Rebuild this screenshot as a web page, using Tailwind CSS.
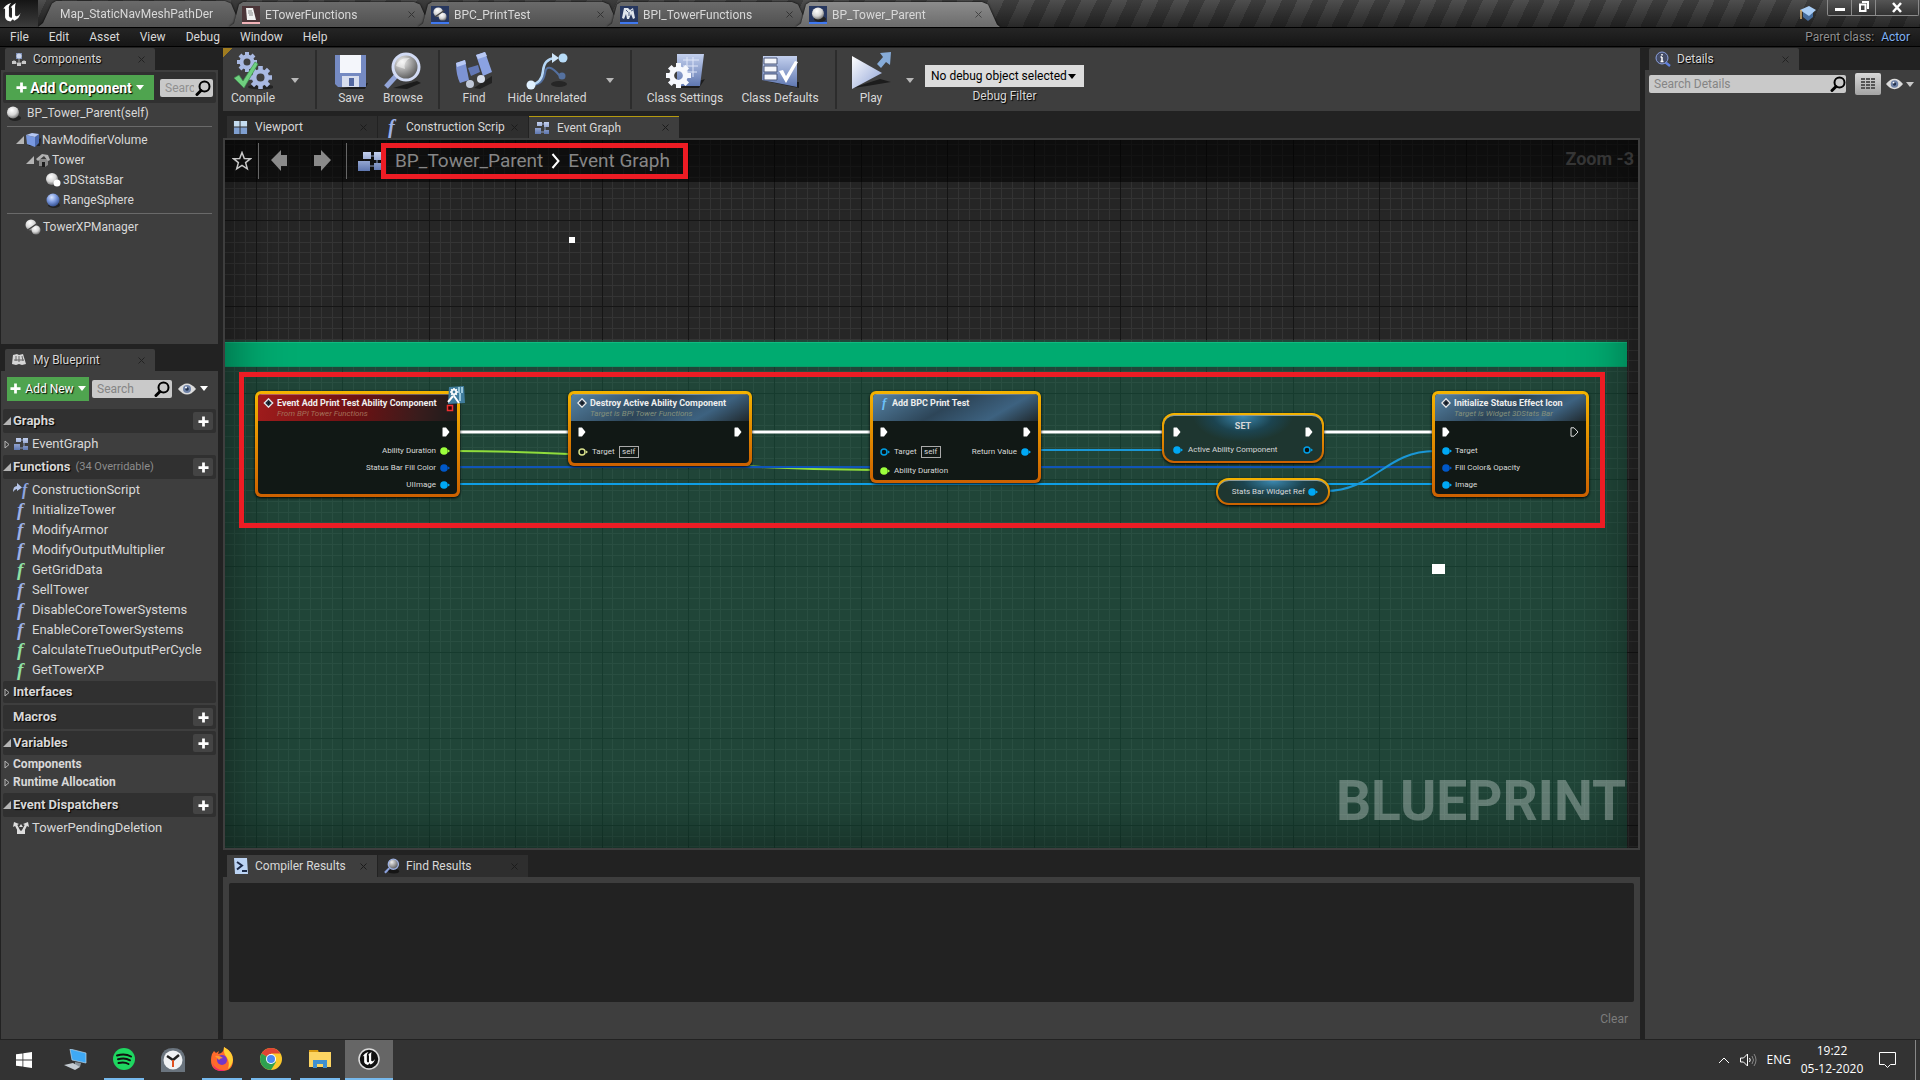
<!DOCTYPE html>
<html lang="en">
<head>
  <meta charset="UTF-8">
  <title>BP_Tower_Parent</title>
  <script src="https://cdn.jsdelivr.net/npm/@tailwindcss/browser@4"></script>
</head>
<body class="h-screen min-h-[900px] flex flex-col overflow-hidden bg-[#222222] font-['Roboto',sans-serif] text-[12px] leading-[16px] text-[#d8d8d8]">

  <!-- shared icons -->
  <svg class="absolute w-0 h-0">
    <defs>
      <linearGradient id="steel" x1="0" y1="0" x2="0" y2="1"><stop offset="0" stop-color="#c3d0ee"/><stop offset="1" stop-color="#5f77b0"/></linearGradient>
      <linearGradient id="pale" x1="0" y1="0" x2="1" y2="1"><stop offset="0" stop-color="#ffffff"/><stop offset="1" stop-color="#8ea2d6"/></linearGradient>
      <radialGradient id="ball" cx=".4" cy=".3" r=".7"><stop offset="0" stop-color="#ffffff"/><stop offset=".6" stop-color="#d6d6d6"/><stop offset="1" stop-color="#777777"/></radialGradient>
      <radialGradient id="blueball" cx=".4" cy=".3" r=".7"><stop offset="0" stop-color="#d8e4ff"/><stop offset=".5" stop-color="#7d9be0"/><stop offset="1" stop-color="#35508f"/></radialGradient>
      <radialGradient id="lens" cx=".35" cy=".3" r=".8"><stop offset="0" stop-color="#eeeeee"/><stop offset=".5" stop-color="#999999"/><stop offset="1" stop-color="#444444"/></radialGradient>
    </defs>
    <symbol id="caret" viewBox="0 0 10 6"><path d="M0 0h10L5 6z" fill="currentColor"/></symbol>
    <symbol id="open" viewBox="0 0 8 8"><path d="M8 0v8H0z" fill="#b4b4b4"/></symbol>
    <symbol id="closed" viewBox="0 0 6 9"><path d="M1 1l4 3.500-4 3.500z" fill="none" stroke="#b4b4b4"/></symbol>
    <symbol id="plus" viewBox="0 0 12 12"><path d="M4.500 0.500h3v4h4v3h-4v4h-3v-4h-4v-3h4z" fill="#fff"/></symbol>
    <symbol id="x" viewBox="0 0 7 7"><path d="M.5.5l6 6M6.500.5l-6 6" stroke="currentColor" fill="none"/></symbol>
    <symbol id="mag" viewBox="0 0 16 16"><circle cx="9.500" cy="6.500" r="5" fill="none" stroke="#000" stroke-width="2"/><path d="M6 10.500L2 14.500" stroke="#000" stroke-width="3" stroke-linecap="round"/></symbol>
    <symbol id="eye" viewBox="0 0 18 12"><path d="M0 6q9-11 18 0-9 11-18 0z" fill="#dcdcdc"/><circle cx="9" cy="6" r="4" fill="#6f83a8"/><circle cx="9" cy="6" r="1.800" fill="#24324e"/><circle cx="8" cy="4.500" r="1" fill="#fff"/></symbol>
    <symbol id="graph" viewBox="0 0 16 14"><path d="M7 3h3M11 6v3M7 11h4" stroke="#8b9cc4"/><path d="M3 1h5v4H3zM10 1h5v5h-5zM1 7h6v6H1zM10 9h5v4h-5z" fill="url(#steel)"/></symbol>
    <symbol id="sphere" viewBox="0 0 16 16"><ellipse cx="9" cy="13" rx="6" ry="3" fill="#222"/><circle cx="7" cy="7.500" r="6" fill="url(#ball)"/></symbol>
    <symbol id="comp" viewBox="0 0 16 16"><circle cx="6" cy="6" r="5.500" fill="url(#ball)"/><circle cx="11" cy="11" r="4.500" fill="url(#ball)"/><path d="M2 11.500L13 4" stroke="#444" stroke-width="1.500"/></symbol>
    <symbol id="iface" viewBox="0 0 16 16"><path d="M3 2h4l2 2 3-2 2 10-2 1-2-5-2 5H6L5 8l-2 5-2-1z" fill="#dfe4ec"/><path d="M5 4l2 2M10 5l2-1M8 6v4" stroke="#4c5c80"/></symbol>
    <symbol id="find" viewBox="0 0 18 18"><path d="M1 16.500l5-5" stroke="#8aa0dc" stroke-width="2.500"/><ellipse cx="11" cy="15" rx="6" ry="2.500" fill="#151515"/><circle cx="10.500" cy="7" r="5.700" fill="url(#lens)" stroke="#9db0e0" stroke-width="1.500"/></symbol>
    <symbol id="exec" viewBox="0 0 8 10"><path d="M1 .5h3L7.500 5 4 9.500H1q-.5 0-.5-.5V1q0-.5.5-.5z" fill="#fff"/></symbol>
    <symbol id="pin" viewBox="0 0 10 8"><circle cx="4" cy="4" r="3.800" fill="currentColor"/><path d="M8 2.500L10 4 8 5.500z" fill="currentColor"/></symbol>
    <symbol id="ring" viewBox="0 0 10 8"><circle cx="4" cy="4" r="3" fill="#0c1210" stroke="currentColor" stroke-width="1.500"/><path d="M8 2.500L10 4 8 5.500z" fill="currentColor"/></symbol>
    <symbol id="diamond" viewBox="0 0 10 10"><path d="M5 .8L9.200 5 5 9.200.8 5z" fill="#253040" stroke="#e8e8e8" stroke-width="1.300"/><path d="M4.500 3.500v3L6.500 5z" fill="#111"/></symbol>
    <symbol id="gear" viewBox="-10 -10 20 20"><circle r="5.500" fill="none" stroke="currentColor" stroke-width="4"/><path d="M0-10v4M0 10V6M-10 0h4M10 0H6M-7-7l3 3M7 7L4 4M-7 7l3-3M7-7L4-4" stroke="currentColor" stroke-width="4"/></symbol>
    <symbol id="ulogo" viewBox="0 0 24 26"><path d="M0 9Q3 2 11 0 7 4 8 7v10q1 3 4 2V7q-1-2-2-1 3-4 7-6-1 2-1 5v11q1 2 3 1 3-1 4-4-1 7-8 10l-2-2-3 3Q5 24 3 19V8Q2 6 0 9z" fill="currentColor"/></symbol>
  </svg>

  <!-- title bar with asset tabs -->
  <header class="h-[27px] shrink-0 flex bg-[repeating-linear-gradient(115deg,#00000000_0_14px,#00000038_14px_28px),linear-gradient(#4e4e4e,#282828)] [text-shadow:1px_1px_1px_#000]">
    <div class="w-[38px] bg-[linear-gradient(#151515,#3c3c3c)] text-white shrink-0"><svg class="w-[24px] h-[20px] mt-[3px]"><use href="#ulogo"/></svg></div>
    <nav class="flex grow">
      <div class="drop-shadow-[0_0_1px_#000] h-full"><button class="w-[205px] h-[26px] mt-[1px] pl-[22px] flex items-center bg-linear-to-b from-[#6a6a6a] to-[#525252] [clip-path:polygon(5px_85%,14px_10%,18px_0,calc(100%-18px)_0,calc(100%-12px)_10%,calc(100%-3px)_90%,100%_100%,0_100%)]">Map_StaticNavMeshPathDer</button></div>
      <div class="drop-shadow-[0_0_1px_#000] h-full -ml-[14px]"><button class="w-[203px] h-[25px] mt-[2px] pl-[13px] pr-[17px] flex items-center gap-[5px] bg-linear-to-b from-[#6a6a6a] to-[#505050] [clip-path:polygon(5px_85%,10px_10%,14px_0,calc(100%-18px)_0,calc(100%-12px)_10%,calc(100%-3px)_90%,100%_100%,0_100%)]">
        <svg class="w-[18px] h-[18px]" viewBox="0 0 18 18"><path fill="#4b3538" d="M0 0h18v18H0z"/><path d="M4 2h7l3 12H5z" fill="#f2f2f2"/><path d="M6 5h4M6 7h5M7 9h4" stroke="#888"/><path d="M0 16h18v2H0z" fill="#f1b3b8"/></svg>
        ETowerFunctions<svg class="w-[7px] h-[7px] ml-auto text-[#333]"><use href="#x"/></svg></button></div>
      <div class="drop-shadow-[0_0_1px_#000] h-full -ml-[14px]"><button class="w-[203px] h-[25px] mt-[2px] pl-[13px] pr-[17px] flex items-center gap-[5px] bg-linear-to-b from-[#6a6a6a] to-[#505050] [clip-path:polygon(5px_85%,10px_10%,14px_0,calc(100%-18px)_0,calc(100%-12px)_10%,calc(100%-3px)_90%,100%_100%,0_100%)]">
        <svg class="w-[18px] h-[18px]" viewBox="0 0 18 18"><path fill="#27375f" d="M0 0h18v18H0z"/><use href="#comp" x="2" y="0" width="14" height="16"/><path d="M0 16h18v2H0z" fill="#3f78f0"/></svg>
        BPC_PrintTest<svg class="w-[7px] h-[7px] ml-auto text-[#333]"><use href="#x"/></svg></button></div>
      <div class="drop-shadow-[0_0_1px_#000] h-full -ml-[14px]"><button class="w-[203px] h-[25px] mt-[2px] pl-[13px] pr-[17px] flex items-center gap-[5px] bg-linear-to-b from-[#6a6a6a] to-[#505050] [clip-path:polygon(5px_85%,10px_10%,14px_0,calc(100%-18px)_0,calc(100%-12px)_10%,calc(100%-3px)_90%,100%_100%,0_100%)]">
        <svg class="w-[18px] h-[18px]" viewBox="0 0 18 18"><path fill="#27375f" d="M0 0h18v18H0z"/><use href="#iface" x="1" y="0" width="16" height="16"/><path d="M0 16h18v2H0z" fill="#3f78f0"/></svg>
        BPI_TowerFunctions<svg class="w-[7px] h-[7px] ml-auto text-[#333]"><use href="#x"/></svg></button></div>
      <div class="drop-shadow-[0_0_1px_#000] h-full -ml-[14px]"><button class="w-[204px] h-[25px] mt-[2px] pl-[13px] pr-[18px] flex items-center gap-[5px] bg-linear-to-b from-[#8c8c8c] to-[#6c6c6c] [clip-path:polygon(5px_85%,10px_10%,14px_0,calc(100%-18px)_0,calc(100%-12px)_10%,calc(100%-3px)_90%,100%_100%,0_100%)]">
        <svg class="w-[18px] h-[18px]" viewBox="0 0 18 18"><path fill="#27375f" d="M0 0h18v18H0z"/><use href="#sphere" x="2" y="0" width="16" height="16"/><path d="M0 16h18v2H0z" fill="#3f78f0"/></svg>
        BP_Tower_Parent<svg class="w-[7px] h-[7px] ml-auto text-[#444]"><use href="#x"/></svg></button></div>
    </nav>
    <svg class="w-[18px] h-[16px] mt-[5px] mr-[10px]" viewBox="0 0 18 16"><path d="M4 7v5l5 4 5-4V7z" fill="#456c9c"/><path d="M1 5l9-4 7 4-7 6z" fill="#a9cdf5"/><path d="M2 5v9" stroke="#d8b070" stroke-width="1.500"/></svg>
    <div class="flex h-[16px] mr-[1px] border border-t-0 border-[#8a8a8a] divide-x divide-[#8a8a8a] bg-linear-to-b from-[#555] to-[#333] rounded-b-[2px]">
      <button aria-label="Minimize" class="w-[24px] flex justify-center"><svg class="w-[10px] h-[12px]"><path d="M0 8h10v3H0z" fill="#fff"/></svg></button>
      <button aria-label="Restore" class="w-[24px] flex justify-center"><svg class="w-[11px] h-[13px]"><path d="M4 2h6v7M2 4.500h5.500v6.500H2z" fill="none" stroke="#fff" stroke-width="2"/></svg></button>
      <button aria-label="Close" class="w-[42px] flex justify-center"><svg class="w-[10px] h-[13px]"><path d="M1 3l8 9M9 3l-8 9" stroke="#fff" stroke-width="2.500"/></svg></button>
    </div>
  </header>

  <!-- menu -->
  <nav class="h-[20px] shrink-0 flex items-center px-[10px] gap-[20px] border-y border-black bg-linear-to-b from-[#252525] to-[#161616] mb-[1px] [text-shadow:1px_1px_1px_#000]">
    <button>File</button><button>Edit</button><button>Asset</button><button>View</button><button>Debug</button><button>Window</button><button>Help</button>
    <span class="ml-auto text-[#8f8f8f]">Parent class: <a href="#" class="ml-[4px] text-[#7fb2f5]">Actor</a></span>
  </nav>

  <div class="grow flex min-h-0 pl-[1px] gap-[5px]">

    <!-- left column -->
    <aside class="w-[217px] shrink-0 flex flex-col">
      <div class="ml-[4px] w-[150px] h-[22px] shrink-0 flex items-center pl-[6px] pr-[10px] gap-[6px] bg-[#3e3e3e] rounded-t-[2px] [text-shadow:1px_1px_1px_#000]">
        <svg class="w-[16px] h-[16px]" viewBox="0 0 16 16"><path d="M5 2h6v6H5z" fill="#7c8fb8"/><path d="M8 8v6M3 9v3h10V9" stroke="#aaa" fill="none"/><circle cx="8" cy="5" r="2.500" fill="#cdd6ea"/><path d="M1 10h4v3H1zM11 10h4v3h-4zM6 12h4v3H6z" fill="#c8c8c8"/></svg>
        Components<svg class="w-[7px] h-[7px] ml-auto text-[#222]"><use href="#x"/></svg>
      </div>
      <section class="h-[274px] shrink-0 bg-[#3e3e3e] pt-[2px] px-[2px]">
        <div class="h-[31px] flex items-center gap-[6px] pl-[3px] pr-[3px] bg-[#303030] rounded-[2px]">
          <button class="w-[148px] h-[25px] flex items-center justify-center gap-[3px] bg-[#4fa44f] text-white font-bold text-[14px] [text-shadow:1px_1px_1px_#000]"><svg class="w-[11px] h-[11px]" viewBox="0 0 12 12"><use href="#plus"/></svg>Add Component<svg class="w-[8px] h-[5px] ml-[1px]"><use href="#caret"/></svg></button>
          <label class="w-[53px] h-[18px] flex items-center bg-[#c9c9c9] rounded-[2px]"><input aria-label="Search components" placeholder="Search" class="w-[34px] pl-[5px] outline-none placeholder:text-[#909090]"><svg class="w-[16px] h-[16px] ml-[1px]"><use href="#mag"/></svg></label>
        </div>
        <div class="h-[20px] flex items-center pl-[3px] gap-[5px]"><svg class="w-[16px] h-[16px]"><use href="#sphere"/></svg>BP_Tower_Parent(self)</div>
        <hr class="mx-[4px] mt-[3px] mb-[3px] border-[#6a6a6a]">
        <div class="h-[20px] flex items-center pl-[13px] gap-[1px]"><svg class="w-[8px] h-[8px]"><use href="#open"/></svg><svg class="w-[16px] h-[16px]" viewBox="0 0 16 16"><path d="M3 14h12l1-8z" fill="#222"/><path d="M1 3l9 2v10l-8-3z" fill="#7898e0"/><path d="M10 5l4-3v9l-4 4z" fill="#4a68ad"/><path d="M1 3l6-2 7 1-4 3z" fill="#b5c8f5"/></svg>NavModifierVolume</div>
        <div class="h-[20px] flex items-center pl-[23px] gap-[1px]"><svg class="w-[8px] h-[8px]"><use href="#open"/></svg><svg class="w-[16px] h-[16px]" viewBox="0 0 16 16"><path d="M4 7v7h3v-4h3v5l3-2V7z" fill="#888"/><path d="M1 7l6-5 6 1 2 5-2 1-4-5-6 5z" fill="#b2b2b2"/><path d="M7 10h3v5H7z" fill="#1c1c1c"/></svg>Tower</div>
        <div class="h-[20px] flex items-center pl-[42px] gap-[2px]"><svg class="w-[16px] h-[16px]" viewBox="0 0 16 16"><circle cx="7" cy="7" r="6" fill="url(#ball)"/><circle cx="12" cy="11" r="3.500" fill="#fff"/></svg>3DStatsBar</div>
        <div class="h-[20px] flex items-center pl-[42px] gap-[2px]"><svg class="w-[16px] h-[16px]" viewBox="0 0 16 16"><ellipse cx="9" cy="13" rx="6" ry="3" fill="#222"/><circle cx="8" cy="8" r="6.500" fill="url(#blueball)"/></svg>RangeSphere</div>
        <hr class="mx-[4px] mt-[3px] mb-[3px] border-[#6a6a6a]">
        <div class="h-[20px] flex items-center pl-[22px] gap-[2px]"><svg class="w-[16px] h-[16px]"><use href="#comp"/></svg>TowerXPManager</div>
      </section>

      <div class="ml-[4px] mt-[5px] w-[150px] h-[22px] shrink-0 flex items-center pl-[6px] pr-[10px] gap-[6px] bg-[#3e3e3e] rounded-t-[2px] [text-shadow:1px_1px_1px_#000]">
        <svg class="w-[16px] h-[16px]" viewBox="0 0 16 16"><path d="M2 3l4-1 2 1 4-1 3 10-4 1-3-1-3 1-4-1z" fill="#d6d6d6"/><path d="M5 4v5M8 4v6M11 4l1 5M3 8h10" stroke="#666"/></svg>
        My Blueprint<svg class="w-[7px] h-[7px] ml-auto text-[#222]"><use href="#x"/></svg>
      </div>
      <section class="grow bg-[#3e3e3e] px-[2px] pt-[5px] text-[13px]">
        <div class="h-[25px] flex items-center pl-[4px] text-[12px]">
          <button class="w-[82px] h-[24px] flex items-center justify-center gap-[4px] bg-[#4fa44f] text-white [text-shadow:1px_1px_1px_#000]"><svg class="w-[11px] h-[11px]" viewBox="0 0 12 12"><use href="#plus"/></svg>Add New<svg class="w-[8px] h-[5px]"><use href="#caret"/></svg></button>
          <label class="ml-[3px] w-[80px] h-[18px] flex items-center bg-[#c9c9c9] rounded-[2px]"><input aria-label="Search blueprint" placeholder="Search" class="w-[62px] pl-[5px] outline-none placeholder:text-[#858585]"><svg class="w-[16px] h-[16px]"><use href="#mag"/></svg></label>
          <button aria-label="View options" class="ml-[6px] flex items-center gap-[4px] text-white"><svg class="w-[18px] h-[12px]"><use href="#eye"/></svg><svg class="w-[8px] h-[5px]"><use href="#caret"/></svg></button>
        </div>

        <div class="mt-[8px] h-[24px] flex items-center gap-[2px] pr-[3px] bg-[#303030] rounded-[2px]"><svg class="w-[8px] h-[8px]"><use href="#open"/></svg><b class="[text-shadow:1px_1px_1px_#000]">Graphs</b><button aria-label="Add graph" class="ml-auto w-[20px] h-[18px] bg-[#444] rounded-[2px] flex items-center justify-center"><svg class="w-[11px] h-[11px]" viewBox="0 0 12 12"><use href="#plus"/></svg></button></div>
        <div class="h-[22px] flex items-center pl-[1px] gap-[3px]"><svg class="w-[6px] h-[9px]"><use href="#closed"/></svg><svg class="w-[16px] h-[14px]"><use href="#graph"/></svg>EventGraph</div>
        <div class="h-[24px] flex items-center gap-[2px] pr-[3px] bg-[#303030] rounded-[2px]"><svg class="w-[8px] h-[8px]"><use href="#open"/></svg><b class="[text-shadow:1px_1px_1px_#000]">Functions</b><span class="ml-[3px] text-[11px] text-[#8c8c8c]">(34 Overridable)</span><button aria-label="Add function" class="ml-auto w-[20px] h-[18px] bg-[#444] rounded-[2px] flex items-center justify-center"><svg class="w-[11px] h-[11px]" viewBox="0 0 12 12"><use href="#plus"/></svg></button></div>
        <ul class="pt-[1px]">
          <li class="h-[20px] flex items-center pl-[10px]"><svg class="w-[9px] h-[14px]" viewBox="0 0 9 14"><path d="M0 9q0-6 4-6V0l5 4.500L4 8V6Q2 6 0 9z" fill="#b7c6ea"/></svg><i aria-hidden="true" class="w-[10px] font-['Liberation_Serif',serif] font-bold text-[16px] text-[#8fa6e0]">f</i>ConstructionScript</li>
          <li class="h-[20px] flex items-center pl-[14px]"><i aria-hidden="true" class="w-[15px] font-['Liberation_Serif',serif] font-bold text-[19px] text-[#9cb0e6]">f</i>InitializeTower</li>
          <li class="h-[20px] flex items-center pl-[14px]"><i aria-hidden="true" class="w-[15px] font-['Liberation_Serif',serif] font-bold text-[19px] text-[#9cb0e6]">f</i>ModifyArmor</li>
          <li class="h-[20px] flex items-center pl-[14px]"><i aria-hidden="true" class="w-[15px] font-['Liberation_Serif',serif] font-bold text-[19px] text-[#9cb0e6]">f</i>ModifyOutputMultiplier</li>
          <li class="h-[20px] flex items-center pl-[14px]"><i aria-hidden="true" class="w-[15px] font-['Liberation_Serif',serif] font-bold text-[19px] text-[#8fe0a4]">f</i>GetGridData</li>
          <li class="h-[20px] flex items-center pl-[14px]"><i aria-hidden="true" class="w-[15px] font-['Liberation_Serif',serif] font-bold text-[19px] text-[#9cb0e6]">f</i>SellTower</li>
          <li class="h-[20px] flex items-center pl-[14px]"><i aria-hidden="true" class="w-[15px] font-['Liberation_Serif',serif] font-bold text-[19px] text-[#9cb0e6]">f</i>DisableCoreTowerSystems</li>
          <li class="h-[20px] flex items-center pl-[14px]"><i aria-hidden="true" class="w-[15px] font-['Liberation_Serif',serif] font-bold text-[19px] text-[#9cb0e6]">f</i>EnableCoreTowerSystems</li>
          <li class="h-[20px] flex items-center pl-[14px]"><i aria-hidden="true" class="w-[15px] font-['Liberation_Serif',serif] font-bold text-[19px] text-[#8fe0a4]">f</i>CalculateTrueOutputPerCycle</li>
          <li class="h-[20px] flex items-center pl-[14px]"><i aria-hidden="true" class="w-[15px] font-['Liberation_Serif',serif] font-bold text-[19px] text-[#8fe0a4]">f</i>GetTowerXP</li>
        </ul>
        <div class="mt-[1px] h-[22px] flex items-center gap-[3px] pl-[1px] bg-[#303030] rounded-[2px]"><svg class="w-[6px] h-[9px]"><use href="#closed"/></svg><b class="[text-shadow:1px_1px_1px_#000]">Interfaces</b></div>
        <div class="mt-[2px] h-[24px] flex items-center pl-[10px] pr-[3px] bg-[#303030] rounded-[2px]"><b class="[text-shadow:1px_1px_1px_#000]">Macros</b><button aria-label="Add macro" class="ml-auto w-[20px] h-[18px] bg-[#444] rounded-[2px] flex items-center justify-center"><svg class="w-[11px] h-[11px]" viewBox="0 0 12 12"><use href="#plus"/></svg></button></div>
        <div class="mt-[2px] h-[24px] flex items-center gap-[2px] pr-[3px] bg-[#303030] rounded-[2px]"><svg class="w-[8px] h-[8px]"><use href="#open"/></svg><b class="[text-shadow:1px_1px_1px_#000]">Variables</b><button aria-label="Add variable" class="ml-auto w-[20px] h-[18px] bg-[#444] rounded-[2px] flex items-center justify-center"><svg class="w-[11px] h-[11px]" viewBox="0 0 12 12"><use href="#plus"/></svg></button></div>
        <div class="h-[18px] flex items-center gap-[3px] pl-[1px]"><svg class="w-[6px] h-[9px]"><use href="#closed"/></svg><b class="text-[12px]">Components</b></div>
        <div class="h-[18px] flex items-center gap-[3px] pl-[1px]"><svg class="w-[6px] h-[9px]"><use href="#closed"/></svg><b class="text-[12px]">Runtime Allocation</b></div>
        <div class="mt-[2px] h-[24px] flex items-center gap-[2px] pr-[3px] bg-[#303030] rounded-[2px]"><svg class="w-[8px] h-[8px]"><use href="#open"/></svg><b class="[text-shadow:1px_1px_1px_#000]">Event Dispatchers</b><button aria-label="Add dispatcher" class="ml-auto w-[20px] h-[18px] bg-[#444] rounded-[2px] flex items-center justify-center"><svg class="w-[11px] h-[11px]" viewBox="0 0 12 12"><use href="#plus"/></svg></button></div>
        <div class="h-[22px] flex items-center pl-[10px] gap-[3px]"><svg class="w-[16px] h-[14px]" viewBox="0 0 16 14"><path d="M4 7l4 3 4-3v6H4z" fill="#ddd"/><path d="M7 12L3 4M9 12l4-8" stroke="#ddd" stroke-width="2.500"/><path d="M0 6l1-5 5 2zM16 6l-1-5-5 2zM6 6l2-3 2 3z" fill="#ddd"/></svg>TowerPendingDeletion</div>
      </section>
    </aside>

    <!-- centre column -->
    <main class="grow min-w-0 flex flex-col">
      <div class="h-[63px] shrink-0 flex items-stretch bg-[#3e3e3e] bg-[linear-gradient(135deg,#a07c20_7px,#00000000_7px)] [text-shadow:1px_1px_1px_#000]">
        <button class="w-[60px] flex flex-col items-center pt-[3px]"><svg class="w-[40px] h-[39px]" viewBox="0 0 40 39"><ellipse cx="28" cy="36" rx="13" ry="2.500" fill="#222"/><g color="#a9b9e2"><use href="#gear" x="4" y="1" width="20" height="20"/><use href="#gear" x="16" y="15" width="23" height="23"/></g><path d="M1 27l5-3 4 6L22 11l3 2-14 24z" fill="#6fd07f" stroke="#3f8f50" stroke-width=".7"/></svg>Compile</button>
        <button aria-label="Compile options" class="w-[24px] pt-[2px] flex items-center justify-center text-[#b8b8b8]"><svg class="w-[8px] h-[5px]"><use href="#caret"/></svg></button>
        <div class="w-[2px] my-[2px] mx-[8px] bg-[#2c2c2c]"></div>
        <button class="w-[52px] flex flex-col items-center pt-[3px]"><svg class="w-[36px] h-[39px]" viewBox="0 0 36 39"><path d="M6 38h26l3-6z" fill="#1c1c1c"/><path d="M2 4h31v32H5l-3-3z" fill="#758ac2"/><path d="M7 4h21v18H7z" fill="#f4f6fb"/><path d="M9 25h17v11H9z" fill="#d8deee"/><path d="M16 27h5v8h-5z" fill="#5468a0"/></svg>Save</button>
        <button class="w-[52px] flex flex-col items-center pt-[3px]"><svg class="w-[40px] h-[39px]" viewBox="0 0 40 39"><path d="M10 37l24-7 4 2-14 6z" fill="#1c1c1c"/><path d="M3 36l10-11" stroke="#93a5d8" stroke-width="5"/><circle cx="23" cy="16" r="13" fill="url(#lens)" stroke="#d2dbf4" stroke-width="3"/><path d="M13 15q3-9 14-8-7 4-5 11z" fill="#fff" opacity=".5"/></svg>Browse</button>
        <div class="w-[2px] my-[2px] ml-[9px] mr-[8px] bg-[#2c2c2c]"></div>
        <button class="w-[52px] flex flex-col items-center pt-[3px]"><svg class="w-[40px] h-[39px]" viewBox="0 0 40 39"><path d="M20 37l18-12v7l-12 6z" fill="#222"/><path d="M2 12l9-3 4 20-9 3q-4-8-4-20z" fill="#7d93d4"/><path d="M22 4l9-3 7 20-9 4z" fill="#8ba2e2"/><path d="M14 17l10-3 2 7-9 4z" fill="#6277b5"/><path d="M2 12l9-3 1 4-9 3zM22 4l9-3 2 4-9 3z" fill="#b8c8f4"/><circle cx="16" cy="33" r="4" fill="#c0c8d8"/><circle cx="27" cy="28" r="4" fill="#d8deea"/></svg>Find</button>
        <button class="w-[94px] flex flex-col items-center pt-[3px]"><svg class="w-[44px] h-[39px]" viewBox="0 0 44 39"><ellipse cx="34" cy="33" rx="8" ry="3" fill="#262626"/><path d="M6 34Q18 34 20 22T35 25" fill="none" stroke="#54709f" stroke-width="2"/><path d="M6 34Q17 32 18 20T30 7" fill="none" stroke="#b6d7f6" stroke-width="2.500"/><path d="M27 2l7 5-7 5z" fill="#cfe6fa"/><circle cx="6" cy="34" r="4.500" fill="#dff0ff"/><circle cx="38" cy="7" r="4.500" fill="#b8dcf8"/><circle cx="37" cy="25" r="3.500" fill="#55719f"/></svg>Hide Unrelated</button>
        <button aria-label="Hide options" class="w-[31px] pt-[2px] flex items-center justify-center text-[#b8b8b8]"><svg class="w-[8px] h-[5px]"><use href="#caret"/></svg></button>
        <div class="w-[2px] my-[2px] mx-[5px] bg-[#2c2c2c]"></div>
        <button class="w-[96px] flex flex-col items-center pt-[3px]"><svg class="w-[40px] h-[39px]" viewBox="0 0 40 39"><path d="M12 37h22l6-9z" fill="#1c1c1c"/><path d="M12 3h27l-4 32H12z" fill="url(#steel)"/><path d="M18 9h16M18 15h15M18 21h14M22 6v20M28 6v20" stroke="#dfe6f8"/><g color="#f6f8fd"><use href="#gear" x="1" y="12" width="25" height="25"/></g></svg>Class Settings</button>
        <button class="w-[94px] flex flex-col items-center pt-[3px]"><svg class="w-[40px] h-[39px]" viewBox="0 0 40 39"><path d="M10 31h29v6z" fill="#1c1c1c"/><path d="M3 5h34v31L2 29z" fill="url(#steel)"/><path d="M4 7h13v6H4zM4 15h13v6H4zM4 23h13v6H4z" fill="#f5f7fc" stroke="#4a5678"/><path d="M19 20l4-1 3 6 9-15 3 1-12 21z" fill="#fff"/></svg>Class Defaults</button>
        <div class="w-[2px] my-[2px] mx-[8px] bg-[#2c2c2c]"></div>
        <button class="w-[52px] flex flex-col items-center pt-[3px]"><svg class="w-[42px] h-[39px]" viewBox="0 0 42 39"><path d="M2 37l28-9 11 3-24 4z" fill="#1c1c1c"/><path d="M2 5l30 17L2 38z" fill="url(#pale)"/><path d="M27 13l6-7-3-4 11-1-1 13-4-3-5 6z" fill="#86abd8"/></svg>Play</button>
        <button aria-label="Play options" class="w-[26px] pt-[2px] flex items-center justify-center text-[#b8b8b8]"><svg class="w-[8px] h-[5px]"><use href="#caret"/></svg></button>
        <div class="ml-[2px] pt-[17px] flex flex-col items-center gap-[1px]">
          <div class="relative">
            <select id="debug" class="block appearance-none w-[159px] h-[22px] pl-[6px] bg-[#dcdcdc] text-black [text-shadow:none]"><option>No debug object selected</option></select>
            <svg class="absolute right-[8px] top-[9px] w-[8px] h-[5px] text-black"><use href="#caret"/></svg>
          </div>
          <label for="debug">Debug Filter</label>
        </div>
      </div>

      <div class="h-[22px] shrink-0 mt-[5px] pl-[4px] flex gap-[1px] [text-shadow:1px_1px_1px_#000]">
        <button class="w-[150px] flex items-center pl-[6px] pr-[10px] gap-[7px] bg-[#2e2e2e]"><svg class="w-[15px] h-[15px]" viewBox="0 0 16 16"><path d="M1 1h6v6H1zM8 1h7v6H8z" fill="#c4dcf0"/><path d="M1 8h6v7H1zM8 8h7v7H8z" fill="#7f9fd0"/></svg>Viewport<svg class="w-[7px] h-[7px] ml-auto text-[#1b1b1b]"><use href="#x"/></svg></button>
        <button class="w-[150px] flex items-center pl-[10px] pr-[10px] bg-[#2e2e2e]"><i aria-hidden="true" class="w-[18px] text-left font-['Liberation_Serif',serif] font-bold text-[20px] text-[#9cb0e6]">f</i>Construction Scrip<svg class="w-[7px] h-[7px] ml-auto text-[#1b1b1b]"><use href="#x"/></svg></button>
        <button class="w-[150px] flex items-center pl-[5px] pr-[10px] gap-[7px] bg-[#3e3e3e] border-t border-[#b59a10]"><svg class="w-[16px] h-[14px]"><use href="#graph"/></svg>Event Graph<svg class="w-[7px] h-[7px] ml-auto text-[#1b1b1b]"><use href="#x"/></svg></button>
      </div>

      <!-- graph canvas -->
      <div class="grow min-h-0 relative overflow-hidden border-2 border-[#3e3e3e] bg-[#262626]">
        <svg class="absolute inset-0 w-full h-full" shape-rendering="crispEdges"><path id="minor" stroke="#343434" fill="none"/><path id="major" stroke="#151515" fill="none"/></svg>
        <!-- comment box -->
        <div class="absolute left-0 right-[11px] top-[200px] bottom-0 bg-[#197656]/40 pt-[2px]"><div class="h-[25px] bg-[#00ab70] border-y border-t-[#10bb80] border-b-[#089c68]"></div></div>
        <div class="absolute inset-0 shadow-[inset_0_0_60px_#00000080]"></div>

        <!-- wires -->
        <svg class="absolute inset-0 w-full h-full" fill="none">
          <path d="M230 292h1000" stroke="#fff" stroke-width="3"/>
          <path d="M230 311C400 311 480 330 650 330" stroke="#8fdc3c" stroke-width="2"/>
          <path d="M230 327h980" stroke="#0f55b8" stroke-width="2"/>
          <path d="M230 344h980" stroke="#0f9fe6" stroke-width="2"/>
          <path d="M810 310h130M1100 351C1150 351 1160 311 1210 311" stroke="#1a97d6" stroke-width="2"/>
        </svg>

        <article class="absolute left-[30px] top-[251px] w-[205px] h-[106px] p-[3px] rounded-[6px] bg-linear-to-b from-[#f4b400] to-[#cc6000] shadow-[0_1px_3px_#000]">
          <div class="h-full rounded-[4px] overflow-hidden bg-[#111815] text-[8px] leading-[10px]">
            <header class="h-[27px] pl-[5px] pt-[3px] flex gap-[3px] bg-[linear-gradient(100deg,#a01c1c,#6d1113_50%,#3a1c1c_80%,#1c1c1c)] border-t border-white/30"><svg class="w-[11px] h-[10px]"><use href="#diamond"/></svg><div><h3 class="text-[9px] leading-[11px] font-bold text-[#eee] whitespace-nowrap">Event Add Print Test Ability Component</h3><p class="italic text-[#a4705a]">From BPI Tower Functions</p></div></header>
            <div class="h-[21px] pr-[7px] flex items-center justify-end"><svg class="w-[8px] h-[10px]"><use href="#exec"/></svg></div>
            <div class="h-[17px] pr-[7px] flex items-center justify-end gap-[4px]">Ability Duration<svg class="w-[10px] h-[8px] text-[#9cff3c]"><use href="#pin"/></svg></div>
            <div class="h-[17px] pr-[7px] flex items-center justify-end gap-[4px]">Status Bar Fill Color<svg class="w-[10px] h-[8px] text-[#0058c8]"><use href="#pin"/></svg></div>
            <div class="h-[17px] pr-[7px] flex items-center justify-end gap-[4px]">UIImage<svg class="w-[10px] h-[8px] text-[#00a8f4]"><use href="#pin"/></svg></div>
          </div>
          <svg class="absolute -top-[6px] right-[-6px] w-[20px] h-[27px]" viewBox="0 0 20 27"><path d="M3 2l15-1 1 17-17 1z" fill="#3f7c9c"/><path d="M13 2v6M16 2v6M14 8v8" stroke="#b8e0f0" stroke-width="1.500"/><g color="#fff"><use href="#gear" x="4" y="3" width="8" height="8"/></g><path d="M7 11L2 17M8 11l5 7" stroke="#fff" stroke-width="2"/><path d="M1.500 20.500h5v5h-5z" fill="#300" stroke="#f03030" stroke-width="1.500"/></svg>
        </article>

        <article class="absolute left-[343px] top-[251px] w-[184px] h-[75px] p-[3px] rounded-[6px] bg-linear-to-b from-[#f4b400] to-[#cc6000] shadow-[0_1px_3px_#000]">
          <div class="h-full rounded-[4px] overflow-hidden bg-[#111815] text-[8px] leading-[10px]">
            <header class="h-[27px] pl-[6px] pt-[3px] flex gap-[3px] bg-[linear-gradient(150deg,#5582a4,#2d4558_45%,#3d6280_75%,#20282c)] border-t border-white/30"><svg class="w-[10px] h-[10px]"><use href="#diamond"/></svg><div><h3 class="text-[9px] leading-[11px] font-bold text-[#eee] whitespace-nowrap">Destroy Active Ability Component</h3><p class="italic text-[#84917c]">Target is BPI Tower Functions</p></div></header>
            <div class="h-[21px] px-[7px] flex items-center justify-between"><svg class="w-[8px] h-[10px]"><use href="#exec"/></svg><svg class="w-[8px] h-[10px]"><use href="#exec"/></svg></div>
            <div class="h-[19px] pl-[7px] flex items-center gap-[4px]"><svg class="w-[10px] h-[8px] text-[#d8e08c]"><use href="#ring"/></svg>Target<span class="w-[20px] h-[12px] border border-[#aaa] text-center">self</span></div>
          </div>
        </article>

        <article class="absolute left-[645px] top-[251px] w-[171px] h-[92px] p-[3px] rounded-[6px] bg-linear-to-b from-[#f4b400] to-[#cc6000] shadow-[0_1px_3px_#000]">
          <div class="h-full rounded-[4px] overflow-hidden bg-[#111815] text-[8px] leading-[10px]">
            <header class="h-[27px] pl-[9px] pt-[3px] flex gap-[4px] bg-[linear-gradient(150deg,#5582a4,#2d4558_45%,#3d6280_75%,#20282c)] border-t border-white/30"><i aria-hidden="true" class="w-[6px] font-['Liberation_Serif',serif] font-bold text-[13px] text-[#6cc0f8]">f</i><h3 class="text-[9px] leading-[11px] font-bold text-[#eee]">Add BPC Print Test</h3></header>
            <div class="h-[21px] px-[7px] flex items-center justify-between"><svg class="w-[8px] h-[10px]"><use href="#exec"/></svg><svg class="w-[8px] h-[10px]"><use href="#exec"/></svg></div>
            <div class="h-[19px] px-[7px] flex items-center gap-[4px]"><svg class="w-[10px] h-[8px] text-[#009ce0]"><use href="#ring"/></svg>Target<span class="w-[20px] h-[12px] border border-[#aaa] text-center">self</span><span class="ml-auto">Return Value</span><svg class="w-[10px] h-[8px] text-[#00a8f4]"><use href="#pin"/></svg></div>
            <div class="h-[19px] pl-[7px] flex items-center gap-[4px]"><svg class="w-[10px] h-[8px] text-[#9cff3c]"><use href="#pin"/></svg>Ability Duration</div>
          </div>
        </article>

        <article class="absolute left-[937px] top-[273px] w-[162px] h-[50px] p-[2px] rounded-[12px] bg-linear-to-b from-[#f4b400] to-[#cc6000] shadow-[0_1px_3px_#000]">
          <div class="relative h-full rounded-[10px] overflow-hidden border-t border-white/50 bg-[radial-gradient(ellipse_50px_26px_at_50%_0,#3b88b0,#1c4450_60%,#1e3630)] text-[8px] leading-[10px]">
            <h3 class="absolute inset-x-0 top-[5px] text-center text-[9px] leading-[11px] font-bold">SET</h3>
            <div class="mt-[6px] h-[19px] px-[9px] flex items-center justify-between"><svg class="w-[8px] h-[10px]"><use href="#exec"/></svg><svg class="w-[8px] h-[10px]"><use href="#exec"/></svg></div>
            <div class="h-[17px] px-[9px] flex items-center gap-[5px]"><svg class="w-[10px] h-[8px] text-[#00a8f4]"><use href="#pin"/></svg>Active Ability Component<svg class="ml-auto w-[10px] h-[8px] text-[#00a0e8]"><use href="#ring"/></svg></div>
          </div>
        </article>

        <article class="absolute left-[991px] top-[338px] w-[114px] h-[27px] p-[2px] rounded-[13px] bg-linear-to-b from-[#f4b400] to-[#cc6000] shadow-[0_1px_3px_#000]">
          <div class="h-full rounded-[11px] pr-[10px] flex items-center justify-end gap-[3px] border-t border-white/50 bg-[radial-gradient(ellipse_50px_20px_at_50%_0,#3b88b0,#1c4450_60%,#1e3630)] text-[8px] leading-[10px]">Stats Bar Widget Ref<svg class="w-[10px] h-[8px] text-[#00a8f4]"><use href="#pin"/></svg></div>
        </article>

        <article class="absolute left-[1207px] top-[251px] w-[157px] h-[106px] p-[3px] rounded-[6px] bg-linear-to-b from-[#f4b400] to-[#cc6000] shadow-[0_1px_3px_#000]">
          <div class="h-full rounded-[4px] overflow-hidden bg-[#111815] text-[8px] leading-[10px]">
            <header class="h-[27px] pl-[6px] pt-[3px] flex gap-[3px] bg-[linear-gradient(150deg,#5582a4,#2d4558_45%,#3d6280_75%,#20282c)] border-t border-white/30"><svg class="w-[10px] h-[10px]"><use href="#diamond"/></svg><div><h3 class="text-[9px] leading-[11px] font-bold text-[#eee] whitespace-nowrap">Initialize Status Effect Icon</h3><p class="italic text-[#84917c]">Target is Widget 3DStats Bar</p></div></header>
            <div class="h-[21px] px-[7px] flex items-center justify-between"><svg class="w-[8px] h-[10px]"><use href="#exec"/></svg><svg class="w-[9px] h-[10px]" viewBox="0 0 9 10"><path d="M1 .8h3L8 5 4 9.200H1z" fill="none" stroke="#ddd"/></svg></div>
            <div class="h-[17px] pl-[7px] flex items-center gap-[3px]"><svg class="w-[10px] h-[8px] text-[#00a8f4]"><use href="#pin"/></svg>Target</div>
            <div class="h-[17px] pl-[7px] flex items-center gap-[3px]"><svg class="w-[10px] h-[8px] text-[#0058c8]"><use href="#pin"/></svg>Fill Color&amp; Opacity</div>
            <div class="h-[17px] pl-[7px] flex items-center gap-[3px]"><svg class="w-[10px] h-[8px] text-[#00a8f4]"><use href="#pin"/></svg>Image</div>
          </div>
        </article>

        <!-- markers -->
        <div class="absolute left-[344px] top-[97px] w-[6px] h-[6px] bg-white"></div>
        <div class="absolute left-[1207px] top-[424px] w-[13px] h-[10px] bg-white"></div>
        <div class="absolute left-[14px] top-[232px] w-[1366px] h-[156px] border-[5px] border-[#ed1c24]"></div>
        <div class="absolute right-[12px] bottom-[16px] font-bold text-[55px] leading-[62px] text-white/30">BLUEPRINT</div>

        <!-- breadcrumb -->
        <div class="relative h-[42px] flex items-center bg-black/55 text-[19px] leading-[22px] text-[#868686]">
          <button aria-label="Favourite" class="ml-[7px]"><svg class="w-[20px] h-[20px]" viewBox="0 0 20 20"><path d="M10 1.500l2.300 6 6.200.2-4.900 3.900 1.700 6.200-5.300-3.500-5.300 3.500 1.700-6.200L1.500 7.700l6.200-.2z" fill="none" stroke="#c8c8c8" stroke-width="1.500"/></svg></button>
          <div class="w-px h-[36px] ml-[6px] bg-[#666]"></div>
          <button aria-label="Back" class="ml-[12px]"><svg class="w-[18px] h-[24px]" viewBox="0 0 18 24"><path d="M0 11L10 1v5h6v11h-6v5z" fill="#8a8a8a"/></svg></button>
          <button aria-label="Forward" class="ml-[24px]"><svg class="w-[18px] h-[24px]" viewBox="0 0 18 24"><path d="M18 11L8 1v5H1v11h7v5z" fill="#8a8a8a"/></svg></button>
          <div class="w-px h-[36px] ml-[15px] bg-[#666]"></div>
          <svg class="w-[28px] h-[22px] ml-[10px]" viewBox="0 0 28 22"><path d="M13 6h5M20 10v4M12 16h8" stroke="#8b9cc4"/><path d="M6 2h8v7H6zM17 2h9v8h-9zM1 11h12v10H1zM17 13h8v7h-8z" fill="url(#steel)"/></svg>
          <div class="relative -ml-[4px] h-[36px] w-[307px] flex items-center px-[9px] gap-[8px] border-[5px] border-[#ed1c24] whitespace-nowrap"><span>BP_Tower_Parent</span><svg class="w-[9px] h-[16px]"><path d="M1.500 1l6 7-6 7" fill="none" stroke="#fff" stroke-width="2"/></svg><span>Event Graph</span></div>
          <span class="ml-auto mr-[4px] mb-[4px] font-bold text-[18px] text-[#353535]">Zoom -3</span>
        </div>
      </div>

      <!-- output tabs -->
      <div class="h-[22px] shrink-0 mt-[5px] pl-[4px] flex gap-[1px] [text-shadow:1px_1px_1px_#000]">
        <button class="w-[150px] flex items-center pl-[6px] pr-[10px] gap-[6px] bg-[#3e3e3e]"><svg class="w-[16px] h-[16px]" viewBox="0 0 16 16"><path d="M1 0h13l1 16H2z" fill="#bcd4f4"/><path d="M4 4l5 3.500-5 4M9 13h5" fill="none" stroke="#1c2a48" stroke-width="2"/></svg>Compiler Results<svg class="w-[7px] h-[7px] ml-auto text-[#1b1b1b]"><use href="#x"/></svg></button>
        <button class="w-[150px] flex items-center pl-[6px] pr-[10px] gap-[6px] bg-[#2e2e2e]"><svg class="w-[16px] h-[16px]"><use href="#find"/></svg>Find Results<svg class="w-[7px] h-[7px] ml-auto text-[#1b1b1b]"><use href="#x"/></svg></button>
      </div>
      <section class="shrink-0 bg-[#3e3e3e] pt-[6px] px-[6px] pb-[12px] flex flex-col">
        <div class="h-[119px] bg-[#222] rounded-[2px]"></div>
        <button class="self-end mr-[6px] mt-[9px] text-[#7c7c7c]">Clear</button>
      </section>
    </main>

    <!-- details -->
    <aside class="w-[275px] shrink-0 flex flex-col">
      <div class="ml-[4px] w-[150px] h-[22px] shrink-0 flex items-center pl-[6px] pr-[10px] gap-[6px] bg-[#3e3e3e] rounded-t-[2px] [text-shadow:1px_1px_1px_#000]">
        <svg class="w-[16px] h-[16px]" viewBox="0 0 16 16"><path d="M10 11l5 4" stroke="#5f80e0" stroke-width="2.500"/><circle cx="7" cy="7" r="6" fill="#444c66" stroke="#8ba0e0"/><path d="M7 3v1.500M7 6v4.500M5.500 10.500h3M5.500 6H7" stroke="#fff" stroke-width="1.500"/></svg>
        Details<svg class="w-[7px] h-[7px] ml-auto text-[#222]"><use href="#x"/></svg>
      </div>
      <section class="grow bg-[#3e3e3e] pt-[3px] pl-[4px]">
        <div class="flex items-center">
          <label class="grow h-[18px] flex items-center bg-[#c9c9c9] rounded-[2px]"><input aria-label="Search details" placeholder="Search Details" class="grow min-w-0 pl-[5px] outline-none placeholder:text-[#858585]"><svg class="w-[16px] h-[16px]"><use href="#mag"/></svg></label>
          <button aria-label="Property matrix" class="ml-[9px] w-[26px] h-[22px] flex items-center justify-center rounded-[2px] bg-linear-to-b from-[#d8d8d8] to-[#a4a4a4]"><svg class="w-[14px] h-[14px]"><path d="M0 2h14M0 5h14M0 8h14M0 11h14" stroke="#555" stroke-width="2" stroke-dasharray="4 1"/></svg></button>
          <button aria-label="View options" class="ml-[5px] mr-[6px] flex items-center gap-[3px] text-[#c8c8c8]"><svg class="w-[17px] h-[12px]"><use href="#eye"/></svg><svg class="w-[8px] h-[5px]"><use href="#caret"/></svg></button>
        </div>
      </section>
    </aside>
  </div>

  <!-- taskbar -->
  <footer class="h-[41px] shrink-0 flex items-stretch border-t border-[#222] bg-[#333333] text-white font-['Open_Sans',sans-serif]">
    <button aria-label="Start" class="w-[48px] flex items-center justify-center"><svg class="w-[16px] h-[16px]" viewBox="0 0 16 16"><path d="M0 2.300l6.500-.9v6.200H0zM7.300 1.300L16 0v7.600H7.300zM0 8.400h6.500v6.200L0 13.700zM7.300 8.400H16V16l-8.700-1.300z" fill="#fff"/></svg></button>
    <button aria-label="This PC" class="w-[54px] flex items-center justify-center"><svg class="w-[24px] h-[22px]" viewBox="0 0 24 22"><path d="M7 0l16 4v10L9 11z" fill="#3fa9f5" stroke="#bcd6e8" stroke-width=".7"/><path d="M12 13l6 1-1 4-5-1z" fill="#8a949c"/><path d="M1 16l9-2 7 4-5 3z" fill="#c5ccd2"/></svg></button>
    <button aria-label="Spotify" class="w-[40px] mx-[2px] flex items-center justify-center border-b-2 border-[#76b9ed]"><svg class="w-[22px] h-[22px]" viewBox="0 0 22 22"><circle cx="11" cy="11" r="11" fill="#1ed760"/><path d="M4 7.500q8-2.500 14 1M5 11.300q7-2 12 1M5.500 15q6-1.500 10 1" fill="none" stroke="#111" stroke-width="2" stroke-linecap="round"/></svg></button>
    <button aria-label="Clock" class="w-[54px] flex items-center justify-center"><svg class="w-[24px] h-[24px]" viewBox="0 0 24 24"><path d="M0 24V9Q2 0 12 0t12 9v15z" fill="#6a747e"/><circle cx="12" cy="12" r="9.500" fill="#f0f2f4"/><path d="M12 12L6 8M12 12l6-5" stroke="#222" stroke-width="2.500"/><path d="M12 12v7" stroke="#e05020" stroke-width="2"/></svg></button>
    <button aria-label="Firefox" class="w-[40px] ml-[2px] flex items-center justify-center border-b-2 border-[#76b9ed]"><svg class="w-[24px] h-[24px]" viewBox="0 0 24 24"><path d="M2 7l2-3 2 2 3-2-1 3q6-1 6-7 9 5 9 13 0 11-11 11T1 13q0-3 1-6z" fill="#ff6a2c"/><path d="M14 0q9 5 9 13-1 6-5 9 2-7-1-11-4-5-3-11z" fill="#ffcf34"/><path d="M2 16q4 8 13 7-6 3-11-2z" fill="#f02870"/><circle cx="12" cy="13" r="5" fill="#7338c8"/><path d="M5 9q4-1 8 2-3 0-4 2z" fill="#ff9a30"/></svg></button>
    <button aria-label="Chrome" class="w-[40px] ml-[9px] flex items-center justify-center border-b-2 border-[#76b9ed]"><svg class="w-[22px] h-[22px]" viewBox="0 0 22 22"><circle cx="11" cy="11" r="11" fill="#fbc82c"/><path d="M11 11L1.500 5.500A11 11 0 0 1 20.500 5.500H11z" fill="#e04434"/><path d="M11 11L1.500 5.500A11 11 0 0 0 11 22l5-8z" fill="#2fa04f"/><circle cx="11" cy="11" r="5" fill="#fff"/><circle cx="11" cy="11" r="4" fill="#4a88f0"/></svg></button>
    <button aria-label="File Explorer" class="w-[40px] ml-[9px] flex items-center justify-center border-b-2 border-[#76b9ed]"><svg class="w-[22px] h-[19px]" viewBox="0 0 22 19"><path d="M0 0h9l1 3H0z" fill="#d89a10"/><path d="M0 2h22v15H0z" fill="#fcd462"/><path d="M4 18v-8h14v8h-4v-4H8v4z" fill="#3f8fd0"/></svg></button>
    <button aria-label="Unreal Editor" class="w-[48px] ml-[5px] flex items-center justify-center bg-[#666] border-b-2 border-[#76b9ed]"><svg class="w-[22px] h-[22px]" viewBox="0 0 22 22"><circle cx="11" cy="11" r="10" fill="#111" stroke="#ddd" stroke-width="1.500"/><g color="#fff"><use href="#ulogo" x="4" y="4" width="14" height="14"/></g></svg></button>
    <div class="ml-auto flex items-center">
      <svg class="w-[12px] h-[7px]"><path d="M1 6l5-5 5 5" fill="none" stroke="#fff"/></svg>
      <svg class="w-[17px] h-[14px] ml-[10px]"><path d="M.5 5h3l4-4v12l-4-4h-3zM9.500 5q1.500 2 0 4" fill="none" stroke="#fff"/><path d="M12 3q3 4 0 8M14 1q4 6 0 12" fill="none" stroke="#888"/></svg>
      <span class="ml-[10px]">ENG</span>
      <div class="ml-[6px] w-[70px] text-center whitespace-nowrap leading-[18px]">19:22<br>05-12-2020</div>
      <svg class="w-[17px] h-[17px] ml-[12px]"><path d="M.5.5h16v12h-5l-3 3-3-3h-5z" fill="none" stroke="#fff"/></svg>
      <div class="w-px h-[40px] ml-[19px] mr-[4px] bg-[#888]"></div>
    </div>
  </footer>

  <script>
    // canvas grid: 8 small cells per large one
    const step = 10.8;
    const lines = { minor: '', major: '' };
    for (let i = -2; i < 400; i++) {
      const x = Math.round(31 + i * step) + 0.5;
      lines[i % 8 === 0 ? 'major' : 'minor'] += `M${x} 0V3000`;
    }
    for (let i = -8; i < 300; i++) {
      const y = Math.round(80 + i * step) + 0.5;
      lines[i % 8 === 0 ? 'major' : 'minor'] += `M0 ${y}H4000`;
    }
    for (const id in lines) document.getElementById(id).setAttribute('d', lines[id]);
  </script>
</body>
</html>
